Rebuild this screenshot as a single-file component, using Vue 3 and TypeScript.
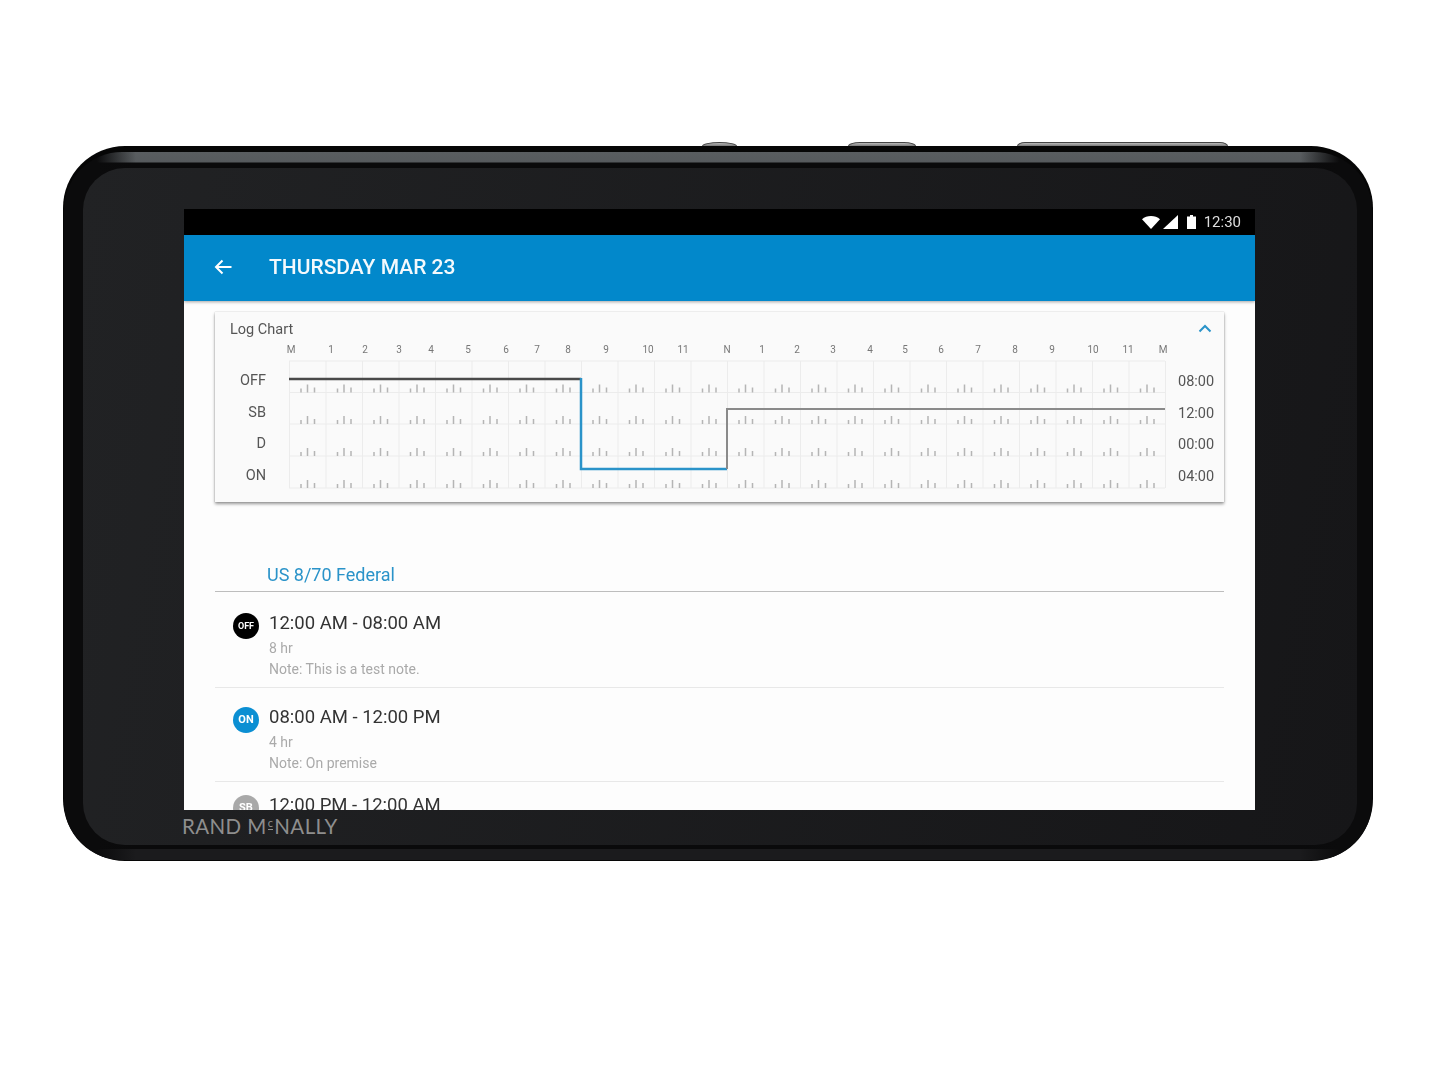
<template>
  <div class="page">
    <div class="device">
      <span class="side-btn btn-a"></span>
      <span class="side-btn btn-b"></span>
      <span class="side-btn btn-c"></span>
      <div class="rim">
        <div class="bezel">
          <div class="screen">
            <div class="status-bar">
              <svg width="18" height="13" viewBox="0 0 18 13" class="wifi">
                <path d="M0 3.2C2.4 1.2 5.5 0 9 0s6.600 1.200 9 3.200L9 13z" fill="#fff" />
              </svg>
              <svg width="15" height="14" viewBox="0 0 15 14" class="signal">
                <path d="M15 0v14H0z" fill="#fff" />
              </svg>
              <svg width="9" height="14" viewBox="0 0 9 14" class="battery">
                <path d="M3 0h3v1.500h3V14H0V1.500h3z" fill="#fff" />
              </svg>
              <span class="clock">12:30</span>
            </div>

            <header class="app-bar">
              <svg width="18" height="16" viewBox="0 0 18 16" class="back">
                <path d="M17.500 8H2M8.500 1.500 2 8l6.500 6.500" fill="none" stroke="#fff" stroke-width="2" />
              </svg>
              <h1 class="title">THURSDAY MAR 23</h1>
            </header>

            <div class="content">
              <section class="card">
                <div class="card-header">
                  <span>Log Chart</span>
                  <svg class="chevron" width="14" height="9" viewBox="0 0 14 9">
                    <path d="M1.500 7.500 7 2l5.500 5.500" fill="none" stroke="#2a93c9" stroke-width="2" />
                  </svg>
                </div>
                <div class="chart">
                  <div class="row-labels">
                    <span v-for="s in statuses" :key="s">{{ s }}</span>
                  </div>
                  <svg class="plot" width="884" height="152" viewBox="0 0 884 152">
                    <text
                      v-for="(h, i) in hours"
                      :key="i"
                      :x="h.x"
                      y="13"
                      class="hour"
                      text-anchor="middle"
                    >{{ h.t }}</text>
                    <g stroke="#ececec" stroke-width="1">
                      <line v-for="c in 25" :key="c" :x1="lineX(c - 1)" :x2="lineX(c - 1)" y1="21" y2="148" />
                      <line v-for="y in rowLines" :key="y" x1="4" x2="880" :y1="y" :y2="y" />
                    </g>
                    <path :d="ticks" stroke="#b5b5b5" stroke-width="1.500" fill="none" />
                    <path d="M4 39H296" stroke="#4a4a4a" stroke-width="2.500" fill="none" />
                    <path d="M296 38V129H442" stroke="#2a93c9" stroke-width="2.500" fill="none" />
                    <path d="M442 129V69H880" stroke="#8a8a8a" stroke-width="2" fill="none" />
                  </svg>
                  <div class="row-totals">
                    <span v-for="t in totals" :key="t">{{ t }}</span>
                  </div>
                </div>
              </section>

              <h2 class="rule-set">US 8/70 Federal</h2>

              <div class="entries">
                <div v-for="e in entries" :key="e.time" class="entry">
                  <span class="badge" :class="e.badge">{{ e.label }}</span>
                  <div>
                    <div class="time">{{ e.time }}</div>
                    <div class="meta">{{ e.duration }}</div>
                    <div class="meta">{{ e.note }}</div>
                  </div>
                </div>
              </div>
            </div>
          </div>
          <div class="logo">RAND M<span class="logo-c">c</span>NALLY</div>
        </div>
      </div>
    </div>
  </div>
</template>

<script setup lang="ts">
const statuses = ["OFF", "SB", "D", "ON"];
const totals = ["08:00", "12:00", "00:00", "04:00"];

const labels = "M 1 2 3 4 5 6 7 8 9 10 11 N 1 2 3 4 5 6 7 8 9 10 11 M".split(" ");
const labelX = [
  6, 46, 80, 114, 146, 183, 221, 252, 283, 321, 363, 398, 442, 477, 512, 548, 585, 620, 656, 693,
  730, 767, 808, 843, 878,
];
const hours = labels.map((t, i) => ({ t, x: labelX[i] }));

const rowLines = [21, 52.5, 84, 116, 148];
const lineX = (i: number) => 4.5 + i * 36.5;

// three little quarter-hour marks at the bottom of every cell
const ticks = rowLines
  .slice(1)
  .map((y) => {
    let d = "";
    for (let c = 0; c < 24; c++) {
      const x = lineX(c);
      d += `M${x + 11.5} ${y}v-4M${x + 18} ${y}v-8M${x + 25} ${y}v-5`;
    }
    return d;
  })
  .join("");

const entries = [
  {
    label: "OFF",
    badge: "off",
    time: "12:00 AM - 08:00 AM",
    duration: "8 hr",
    note: "Note: This is a test note.",
  },
  {
    label: "ON",
    badge: "on",
    time: "08:00 AM - 12:00 PM",
    duration: "4 hr",
    note: "Note: On premise",
  },
  {
    label: "SB",
    badge: "sb",
    time: "12:00 PM - 12:00 AM",
    duration: "12 hr",
    note: "",
  },
];
</script>

<style>
html,
body {
  background: #fff;
}
</style>

<style scoped>
.page {
  height: 1080px;
  box-sizing: border-box;
  padding: 146px 0 0 63px;
  font-family: Roboto, "Noto Sans", sans-serif;
}

.device {
  position: relative;
  width: 1310px;
  height: 715px;
  box-sizing: border-box;
  padding: 6px 1px 1px 1px;
  border-radius: 62px;
  background: #060606;
}

.side-btn {
  position: absolute;
  top: -4px;
  height: 4px;
  box-sizing: border-box;
  border: 1px solid #444;
  border-bottom: 0;
  background: linear-gradient(#bbb, #777);
}

.btn-a {
  left: 639px;
  width: 35px;
  border-radius: 50% 50% 0 0 / 100% 100% 0 0;
}

.btn-b {
  left: 785px;
  width: 68px;
  border-radius: 12px 12px 0 0 / 4px 4px 0 0;
}

.btn-c {
  left: 954px;
  width: 211px;
  border-radius: 8px 8px 0 0 / 4px 4px 0 0;
}

.rim {
  height: 100%;
  box-sizing: border-box;
  padding: 16px 15px 15px 19px;
  border-radius: 58px;
  background:
    linear-gradient(to right, #0b0b0c 2.5%, transparent 5.5%, transparent 94.5%, #0b0b0c 97.500%),
    linear-gradient(to bottom, #595d60 0, #565a5d 10px, #0a0a0b 11px, #0a0a0b 98.500%, #1b1b1d 98.500%);
}

.bezel {
  height: 100%;
  box-sizing: border-box;
  padding: 41px 0 0 101px;
  border-radius: 42px;
  background: linear-gradient(100deg, #212224, #161618);
}

.screen {
  width: 1071px;
  height: 601px;
  overflow: hidden;
  background: #fdfdfd;
  filter: blur(0.5px);
}

.status-bar {
  height: 26px;
  display: flex;
  align-items: center;
  justify-content: flex-end;
  padding-right: 14px;
  background: #000;
}

.signal {
  margin-left: 3px;
}

.battery {
  margin-left: 9px;
}

.clock {
  margin-left: 8px;
  color: #ddd;
  font-size: 15px;
}

.app-bar {
  height: 63px;
  padding-bottom: 3px;
  display: flex;
  align-items: center;
  padding-left: 30px;
  background: #0288cb;
  box-shadow: 0 1px 3px rgba(0, 0, 0, 0.35);
  position: relative;
}

.title {
  margin: 0 0 0 37px;
  color: #f4f9fc;
  font-size: 21px;
  font-weight: 500;
}

.content {
  padding: 11px 31px 0;
}

.card {
  height: 190px;
  box-sizing: border-box;
  background: #fafafa;
  box-shadow:
    0 2px 3px rgba(0, 0, 0, 0.4),
    0 0 1px rgba(0, 0, 0, 0.25);
}

.card-header {
  display: flex;
  align-items: center;
  justify-content: space-between;
  padding: 9px 12px 0 15px;
  height: 18px;
  line-height: 18px;
  color: #555;
  font-size: 14.5px;
}

.chevron {
  margin-top: -3px;
}

.chart {
  display: flex;
  gap: 9px;
  margin-top: 1px;
}

.row-labels,
.row-totals {
  display: flex;
  flex-direction: column;
  color: #555;
  font-size: 14.5px;
  line-height: 31.5px;
  height: 20px;
}

.row-labels {
  width: 51px;
  margin-right: 10px;
  text-align: right;
  padding-top: 25px;
}

.row-totals {
  padding-top: 26px;
}

.plot {
  flex: none;
}

.hour {
  fill: #777;
  font-size: 10px;
  font-family: Roboto, sans-serif;
}

.rule-set {
  margin: 62px 0 0;
  padding: 0 0 5px 52px;
  height: 22px;
  line-height: 22px;
  border-bottom: 1.5px solid #bdbdbd;
  color: #2a93c9;
  font-size: 18px;
  font-weight: 400;
}

.entries {
  padding-top: 1.5px;
}

.entry {
  display: flex;
  gap: 10px;
  height: 74px;
  padding: 19px 0 0 18px;
  border-bottom: 1px solid #e8e8e8;
}

.entry:last-child {
  padding-top: 13px;
}

.badge {
  flex: none;
  width: 26px;
  height: 26px;
  border-radius: 50%;
  color: #fff;
  font-size: 9px;
  font-weight: 700;
  line-height: 26px;
  text-align: center;
}

.badge.off {
  background: #000;
}

.badge.on {
  background: #0b8fd3;
  font-size: 11px;
}

.badge.sb {
  background: #a9a9a9;
  font-size: 11px;
}

.time {
  height: 22px;
  margin: -1px 0 4px;
  line-height: 22px;
  color: #333;
  font-size: 18.5px;
}

.meta {
  height: 21px;
  line-height: 21px;
  color: #aaa;
  font-size: 14px;
}

.logo {
  margin: 4px 0 0 -2px;
  color: #8e8e8e;
  font-family: Lato, sans-serif;
  font-size: 20.5px;
  font-weight: 400;
  line-height: 24px;
  letter-spacing: 0.4px;
}

.logo-c {
  font-size: 11px;
  line-height: 1;
  vertical-align: 7px;
  border-bottom: 1px solid #8e8e8e;
  margin: 0 1px;
}
</style>
